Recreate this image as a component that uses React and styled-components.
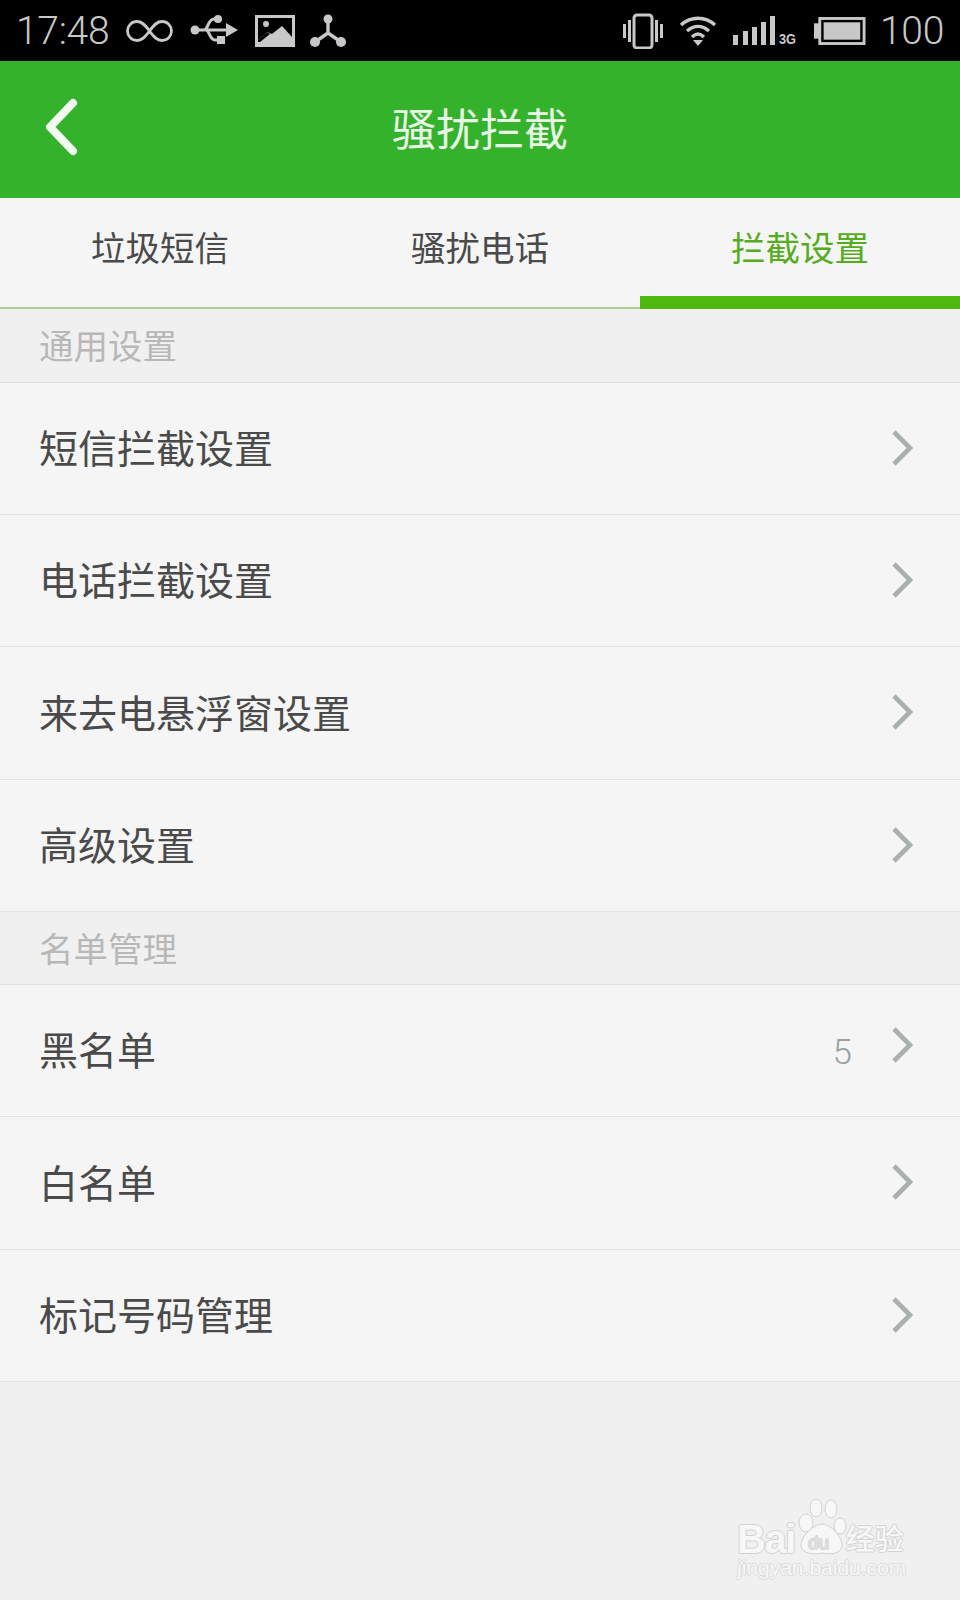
import React from "react";
import styled, { createGlobalStyle } from "styled-components";

const GlobalStyle = createGlobalStyle`
  html, body {
    margin: 0;
    padding: 0;
    background: #f0f0f0;
  }
  * {
    box-sizing: border-box;
  }
`;

const cjk = `"Noto Sans CJK SC", "Noto Sans", sans-serif`;

const Page = styled.div`
  position: relative;
  width: 960px;
  height: 1600px;
  overflow: hidden;
  background: #f0f0f0;
  font-family: ${cjk};
  font-weight: 400;
`;

const StatusBar = styled.div`
  height: 61px;
  background: #000;
  color: #c8c8c8;
  display: flex;
  align-items: center;
  justify-content: space-between;
  padding: 0 16px;
`;

const StatusGroup = styled.div`
  display: flex;
  align-items: center;
`;

const StatusText = styled.span`
  font-family: Roboto, "Liberation Sans", sans-serif;
  font-weight: 300;
  font-size: 39px;
  line-height: 59px;
  padding-top: 2px;
  letter-spacing: -0.3px;
  margin-left: ${(p) => p.$gap || 0}px;
`;

const Icon = styled.svg`
  display: block;
  flex: none;
  margin-left: ${(p) => p.$gap || 0}px;
`;

const Header = styled.div`
  height: 137px;
  background: #34b22c;
  display: grid;
  grid-template-columns: 1fr auto 1fr;
  align-items: center;
  padding-bottom: 5px;
`;

const BackIcon = styled.svg`
  display: block;
  margin-left: 44px;
`;

const Title = styled.h1`
  margin: 0;
  color: #e9f7e6;
  font-size: 44px;
  font-weight: 400;
  line-height: 1;
`;

const Tabs = styled.div`
  height: 111px;
  display: flex;
  background: #f5f5f5;
  border-bottom: 2px solid #a9cf96;
`;

const Tab = styled.div`
  flex: 1;
  display: flex;
  align-items: center;
  justify-content: center;
  font-size: 34.5px;
  color: ${(p) => (p.$active ? "#55ac20" : "#4a4a4a")};
  height: ${(p) => (p.$active ? "111px" : "109px")};
  padding-bottom: ${(p) => (p.$active ? "2px" : "14px")};
  border-bottom: ${(p) => (p.$active ? "13px solid #4fb80f" : "none")};
`;

const SectionHeader = styled.div`
  height: ${(p) => p.$height || 73}px;
  background: #f0f0f0;
  border-bottom: 1px solid #e0e0e0;
  padding: 0 0 3px 39px;
  display: flex;
  align-items: center;
  font-size: 34.5px;
  color: #b8b8b8;
`;

const Row = styled.div`
  height: ${(p) => p.$height || 132}px;
  background: #f5f5f5;
  border-bottom: 1px solid #e3e3e3;
  padding: 0 47px 5px 39px;
  display: flex;
  align-items: center;
`;

const RowLabel = styled.span`
  flex: 1;
  font-size: 39px;
  color: #4a4a4a;
`;

const Count = styled.span`
  font-family: Roboto, "Liberation Sans", sans-serif;
  font-size: 35px;
  font-weight: 300;
  color: #98a2a2;
  margin: 9px 39px 0 0;
`;

const Chevron = styled.svg`
  display: block;
  flex: none;
  margin: ${(p) => (p.$raised ? "0 0 7px" : "3px 0 0")};
`;

/* the site's stamp, it sits over the page */
const Watermark = styled.div`
  position: absolute;
  right: 48px;
  bottom: 20px;
  width: 176px;
  display: flex;
  flex-direction: column;
  padding-left: 1px;
  color: #f7f7f7;
  text-shadow: 1px 0 0 #d2d2d2, -1px 0 0 #d2d2d2, 0 1px 0 #d2d2d2, 0 -1px 0 #d2d2d2;
`;

const WatermarkLogo = styled.div`
  display: flex;
  align-items: flex-end;
  height: 58px;
`;

const WatermarkBrand = styled.span`
  font-family: "Liberation Sans", sans-serif;
  font-weight: 700;
  font-size: 40px;
  line-height: 34px;
  letter-spacing: -1.5px;
`;

const WatermarkWord = styled.span`
  margin: 0 0 2px -2px;
  font-size: 29px;
  font-weight: 500;
  line-height: 34px;
  white-space: nowrap;
`;

const WatermarkUrl = styled.span`
  font-family: "Liberation Sans", sans-serif;
  font-size: 21px;
  line-height: 24px;
  white-space: nowrap;
  text-shadow: 1px 0 0 #dcdcdc, -1px 0 0 #dcdcdc, 0 1px 0 #dcdcdc, 0 -1px 0 #dcdcdc;
`;

const PawIcon = styled.svg`
  display: block;
  flex: none;
  margin-left: 1px;
`;

const RowChevron = ({ raised }) => (
  <Chevron $raised={raised} width="22" height="36" viewBox="0 0 22 36">
    <path d="M3 2 L19 18 L3 34" fill="none" stroke="#a9b0af" strokeWidth="4.6" />
  </Chevron>
);

const general = [
  { label: "短信拦截设置", height: 132 },
  { label: "电话拦截设置", height: 132 },
  { label: "来去电悬浮窗设置", height: 133 },
  { label: "高级设置", height: 132 },
];
const lists = [
  { label: "黑名单", count: 5, height: 132 },
  { label: "白名单", height: 133 },
  { label: "标记号码管理", height: 132 },
];

const App = () => (
  <Page>
    <GlobalStyle />
    <StatusBar>
      <StatusGroup>
        <StatusText>17:48</StatusText>
        <Icon $gap={16} width="49" height="26" viewBox="0 0 48 26">
          <path
            d="M24 13 C19 6 16 3.500 11.500 3.500 C6 3.500 2 8 2 13 C2 18 6 22.500 11.500 22.500 C16 22.500 19 20 24 13 C29 6 32 3.500 36.500 3.500 C42 3.500 46 8 46 13 C46 18 42 22.500 36.500 22.500 C32 22.500 29 20 24 13 Z"
            fill="none"
            stroke="#c8c8c8"
            strokeWidth="2.800"
          />
        </Icon>
        <Icon $gap={16} width="50" height="34" viewBox="0 0 50 34">
          <g fill="#c8c8c8" stroke="none">
            <circle cx="5" cy="16" r="4.500" />
            <circle cx="28" cy="5" r="4" />
            <rect x="27" y="22" width="8" height="8" />
            <path d="M36 9 L48 16 L36 23 Z" />
          </g>
          <path
            d="M5 16 L38 16 M14 16 C18 16 18 5 24 5 L28 5 M16 16 C19 16 20 26 25 26 L30 26"
            fill="none"
            stroke="#c8c8c8"
            strokeWidth="3"
          />
        </Icon>
        <Icon $gap={15} width="40" height="32" viewBox="0 0 40 32">
          <rect width="40" height="32" fill="#c8c8c8" />
          <path fill="#000" d="M3 3 H37 V22 L27 11 L17 19 L12 17 L3 25 Z" />
          <path fill="#000" d="M3 25 L12 17 L15 19 L5 27 H3 Z" />
          <circle cx="11" cy="9" r="3" fill="#c8c8c8" />
        </Icon>
        <Icon $gap={14} width="38" height="34" viewBox="0 0 38 34">
          <path
            d="M19 5 V19 L6 28 M19 19 L32 28"
            fill="none"
            stroke="#c8c8c8"
            strokeWidth="3.400"
          />
          <circle cx="19" cy="5" r="4.500" fill="#c8c8c8" />
          <circle cx="6" cy="28" r="5" fill="#c8c8c8" />
          <circle cx="32" cy="28" r="5" fill="#c8c8c8" />
        </Icon>
      </StatusGroup>
      <StatusGroup>
        <Icon width="40" height="36" viewBox="0 0 40 36">
          <rect x="11" y="2" width="18" height="33" rx="3" fill="none" stroke="#c8c8c8" strokeWidth="3" />
          <path d="M1.500 11 V25 M6.500 7 V29 M33.500 7 V29 M38.500 11 V25" stroke="#c8c8c8" strokeWidth="3" />
        </Icon>
        <Icon $gap={16} width="38" height="32" viewBox="0 0 38 32">
          <path
            d="M2 10 C12 1 26 1 36 10 M8 16 C15 10 23 10 30 16 M13 22 C17 18 21 18 25 22"
            fill="none"
            stroke="#c8c8c8"
            strokeWidth="3.400"
          />
          <path d="M14 25 H24 L19 31 Z" fill="#c8c8c8" />
        </Icon>
        <Icon $gap={16} width="66" height="34" viewBox="0 0 66 34">
          <g fill="#c8c8c8">
            <rect x="0" y="21" width="5" height="10" />
            <rect x="10" y="17" width="5" height="14" />
            <rect x="19" y="13" width="5" height="18" />
            <rect x="28" y="8" width="5" height="23" />
            <rect x="37" y="2" width="5" height="29" />
            <text x="46" y="30" fontFamily="Liberation Sans, sans-serif" fontWeight="700" fontSize="14" textLength="17" lengthAdjust="spacingAndGlyphs">
              3G
            </text>
          </g>
        </Icon>
        <Icon $gap={15} width="52" height="30" viewBox="0 0 54 30">
          <rect x="0" y="7" width="6" height="16" fill="#c8c8c8" />
          <rect x="6" y="2" width="46" height="26" fill="none" stroke="#c8c8c8" strokeWidth="3" />
          <rect x="10" y="6" width="38" height="18" fill="#c8c8c8" />
        </Icon>
        <StatusText $gap={14}>100</StatusText>
      </StatusGroup>
    </StatusBar>

    <Header>
      <BackIcon width="34" height="60" viewBox="0 0 34 60">
        <path
          d="M29 6 L6 30 L29 54"
          fill="none"
          stroke="#f4fbf2"
          strokeWidth="8"
          strokeLinecap="round"
          strokeLinejoin="round"
        />
      </BackIcon>
      <Title>骚扰拦截</Title>
    </Header>

    <Tabs>
      <Tab>垃圾短信</Tab>
      <Tab>骚扰电话</Tab>
      <Tab $active>拦截设置</Tab>
    </Tabs>

    <SectionHeader $height={74}>通用设置</SectionHeader>
    {general.map((item) => (
      <Row key={item.label} $height={item.height}>
        <RowLabel>{item.label}</RowLabel>
        <RowChevron />
      </Row>
    ))}

    <SectionHeader>名单管理</SectionHeader>
    {lists.map((item) => (
      <Row key={item.label} $height={item.height}>
        <RowLabel>{item.label}</RowLabel>
        {item.count && <Count>{item.count}</Count>}
        <RowChevron raised={Boolean(item.count)} />
      </Row>
    ))}

    <Watermark>
      <WatermarkLogo>
        <WatermarkBrand>Bai</WatermarkBrand>
        <PawIcon width="52" height="58" viewBox="0 0 52 58">
          <g fill="#f7f7f7" stroke="#d2d2d2" strokeWidth="1">
            <ellipse cx="10" cy="25" rx="7" ry="9" />
            <ellipse cx="20" cy="10" rx="6" ry="9" />
            <ellipse cx="35" cy="11" rx="6" ry="9" />
            <ellipse cx="44" cy="28" rx="6" ry="8" />
            <path d="M26 26 C34 26 46 38 46 47 C46 56 34 57 26 55 C18 57 5 56 5 47 C5 38 18 26 26 26 Z" />
          </g>
          <text x="12" y="51" fontFamily="Liberation Sans, sans-serif" fontSize="19" fill="#e0e0e0" stroke="none">
            du
          </text>
        </PawIcon>
        <WatermarkWord>经验</WatermarkWord>
      </WatermarkLogo>
      <WatermarkUrl>jingyan.baidu.com</WatermarkUrl>
    </Watermark>
  </Page>
);

export default App;
